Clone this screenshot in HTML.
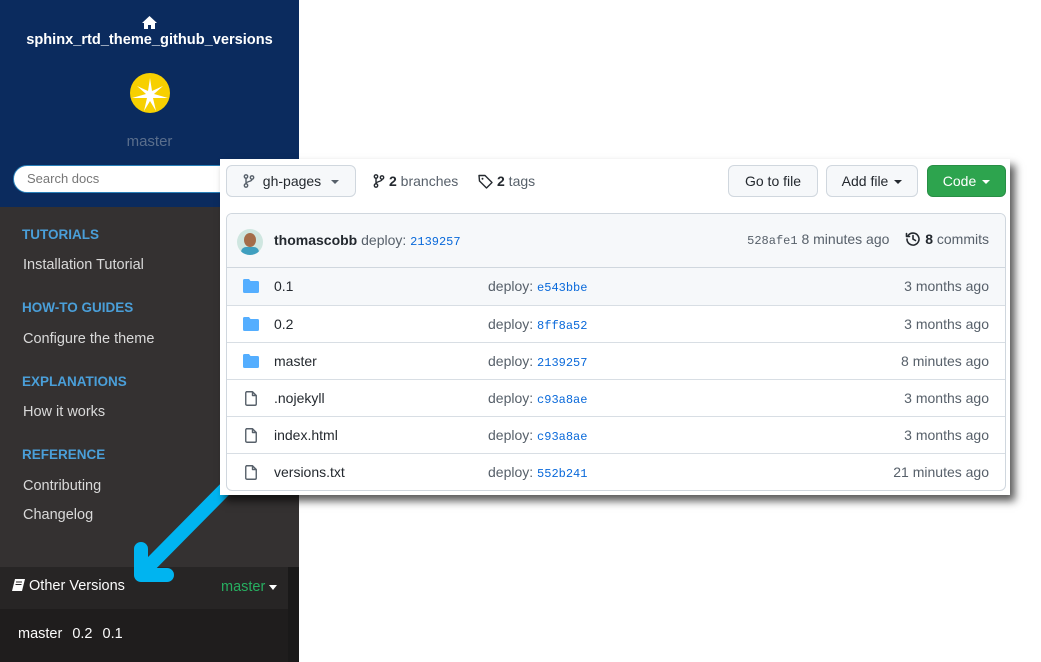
<!DOCTYPE html><html><head><meta charset="utf-8"><style>
*{margin:0;padding:0;box-sizing:border-box}
body{width:1041px;height:662px;position:relative;overflow:hidden;background:#fff;font-family:"Liberation Sans",sans-serif}
.side{position:absolute;left:0;top:0;width:299px;height:662px;background:#343131}
.top{position:absolute;left:0;top:0;width:299px;height:207px;background:#0b2b5e;text-align:center;color:#fff}
.t{position:absolute;left:0;width:299px;font-weight:bold;font-size:14.6px;top:32px}
.cap{position:absolute;left:22px;color:#4a9fd9;font-weight:bold;font-size:13.5px}
.it{position:absolute;left:23px;color:#d9d9d9;font-size:14.5px}
.panel{position:absolute;left:220px;top:159px;width:790px;height:336px;background:#fff;box-shadow:5px 6px 8px rgba(0,0,0,.65);color:#24292f;font-size:14px}
.btn{position:absolute;top:6px;height:32px;border:1px solid #d0d7de;border-radius:6px;background:#f6f8fa;font-size:14px;line-height:30px;text-align:center}
.box{position:absolute;left:6px;top:54px;width:780px;height:278px;border:1px solid #d0d7de;border-radius:6px;overflow:hidden}
.hd{height:54px;background:#f6f8fa;border-bottom:1px solid #d0d7de;position:relative}
.row{height:37px;border-top:1px solid #d8dee4;position:relative;line-height:36px}
.row.f{border-top:none}
.row .ic{position:absolute;left:16px;top:11px}
.row .n{position:absolute;left:47px}
.row .m{position:absolute;left:261px;color:#57606a}
.row .a{position:absolute;right:16px;color:#57606a}
.mono{font-family:"Liberation Mono",monospace;font-size:12px;color:#0969da}
.gr{color:#57606a}
.car{display:inline-block;border-left:4px solid transparent;border-right:4px solid transparent;border-top:4px solid currentColor;vertical-align:middle;margin-left:4px}
</style></head><body>
<div class="side">
<div class="top">
<svg style="position:absolute;left:142px;top:16px" width="15" height="13" viewBox="0 0 15 13"><path d="M7.5 0 L15 7 L13 7 L13 13 L9 13 L9 9 L6 9 L6 13 L2 13 L2 7 L0 7Z" fill="#fff"/></svg>
<div class="t">sphinx_rtd_theme_github_versions</div>
<svg style="position:absolute;left:130px;top:73px" width="40" height="40" viewBox="0 0 40 40"><circle cx="20" cy="20" r="20" fill="#f7d000"/><path d="M20 5 L22 18 L33 13 L24 21 L38 25 L23 25 L26 38 L20 28 L14 38 L17 25 L2 25 L16 21 L7 13 L18 18Z" fill="#fff"/></svg>
<div style="position:absolute;left:0;width:299px;top:133px;font-size:15px;color:#5a6e8c">master</div>
<div style="position:absolute;left:13px;top:165px;width:290px;height:28px;border-radius:14px;background:#fff;border:1px solid #2980b9;text-align:left;padding-left:13px;line-height:26px;font-size:13px;color:#777">Search docs</div>
</div>
<div class="cap" style="top:227px">TUTORIALS</div><div class="it" style="top:257px">Installation Tutorial</div>
<div class="cap" style="top:300px">HOW-TO GUIDES</div><div class="it" style="top:331px">Configure the theme</div>
<div class="cap" style="top:374px">EXPLANATIONS</div><div class="it" style="top:404px">How it works</div>
<div class="cap" style="top:447px">REFERENCE</div><div class="it" style="top:478px">Contributing</div><div class="it" style="top:507px">Changelog</div>
<div style="position:absolute;left:0;top:567px;width:288px;height:42px;background:#272525"></div>
<div style="position:absolute;left:0;top:609px;width:288px;height:53px;background:#1f1d1d"></div>
<div style="position:absolute;left:288px;top:567px;width:11px;height:95px;background:#1a1919"></div>
<div style="position:absolute;left:12px;top:578px;color:#fcfcfc;font-size:14.5px"><svg width="13" height="12" viewBox="0 0 13 12" style="vertical-align:-1px"><path d="M3 0H13L10 12H0Z" fill="#fcfcfc"/><path d="M4 3H10M3.5 5.5H9.5" stroke="#272525" stroke-width="1"/></svg> Other Versions</div>
<div style="position:absolute;left:221px;top:579px;color:#27ae60;font-size:14.5px">master<span class="car" style="color:#fff;border-width:5px 4px 0"></span></div>
<div style="position:absolute;left:18px;top:626px;color:#fcfcfc;font-size:14.5px;word-spacing:6px">master 0.2 0.1</div>
</div>
<svg style="position:absolute;left:0;top:0" width="300" height="662"><g stroke="#00b4f0" stroke-width="14" stroke-linecap="round" stroke-linejoin="round" fill="none"><path d="M232 482 L145 570"/><path d="M141 549 L141 575 L167 575"/></g></svg>
<div class="panel">
<div class="btn" style="left:6px;width:130px"><svg width="12" height="14" viewBox="0 0 12 14" style="vertical-align:-2px;margin-right:8px"><g fill="none" stroke="#57606a" stroke-width="1.4"><circle cx="3" cy="2.5" r="1.7"/><circle cx="3" cy="11.5" r="1.7"/><circle cx="9" cy="3.5" r="1.7"/><path d="M3 4.2V9.8M9 5.2C9 8 3 7 3 9.8"/></g></svg>gh-pages<span class="car" style="margin-left:10px;color:#57606a"></span></div>
<div style="position:absolute;left:153px;top:14px;color:#57606a"><svg width="12" height="14" viewBox="0 0 12 14" style="vertical-align:-2px;margin-right:4px"><g fill="none" stroke="#24292f" stroke-width="1.4"><circle cx="3" cy="2.5" r="1.7"/><circle cx="3" cy="11.5" r="1.7"/><circle cx="9" cy="3.5" r="1.7"/><path d="M3 4.2V9.8M9 5.2C9 8 3 7 3 9.8"/></g></svg><b style="color:#24292f">2</b> branches</div>
<div style="position:absolute;left:258px;top:14px;color:#57606a"><svg width="15" height="15" viewBox="0 0 15 15" style="vertical-align:-3px;margin-right:4px"><path d="M1 1.5H7L14 8.5L8.5 14L1.5 7Z" fill="none" stroke="#24292f" stroke-width="1.4" stroke-linejoin="round"/><circle cx="4.5" cy="4.8" r="1" fill="#24292f"/></svg><b style="color:#24292f">2</b> tags</div>
<div class="btn" style="left:508px;width:90px">Go to file</div>
<div class="btn" style="left:606px;width:92px">Add file<span class="car" style="margin-left:6px"></span></div>
<div class="btn" style="left:707px;width:79px;background:#2da44e;border-color:#288e45;color:#fff">Code<span class="car" style="margin-left:6px"></span></div>
<div class="box">
<div class="hd">
<div style="position:absolute;left:10px;top:15px;width:26px;height:26px;border-radius:50%;background:#cfe6e0;overflow:hidden"><div style="position:absolute;left:7px;top:4px;width:12px;height:14px;border-radius:50%;background:#a46d4a"></div><div style="position:absolute;left:4px;top:18px;width:18px;height:10px;background:#3f9fbf;border-radius:5px 5px 0 0"></div></div>
<div style="position:absolute;left:47px;top:18px"><b>thomascobb</b> <span class="gr">deploy:</span> <span class="mono">2139257</span></div>
<div style="position:absolute;right:16px;top:17px" class="gr"><span class="mono" style="color:#57606a">528afe1</span> 8 minutes ago <svg width="16" height="16" viewBox="0 0 16 16" style="vertical-align:-3px;margin-left:12px"><path d="M3.2 4.5A6 6 0 1 1 2 8" fill="none" stroke="#24292f" stroke-width="1.6" stroke-linecap="round"/><path d="M1.5 2.5V5.5H4.5" fill="none" stroke="#24292f" stroke-width="1.6" stroke-linecap="round" stroke-linejoin="round"/><path d="M8 4.5V8L10.5 9.5" fill="none" stroke="#24292f" stroke-width="1.6" stroke-linecap="round"/></svg> <b style="color:#24292f">8</b> commits</div>
</div>
<div class="row f" style="background:#f6f8fa"><svg class="ic" width="16" height="14" viewBox="0 0 16 14"><path d="M0 1.5Q0 0 1.5 0H6L7.5 2H14.5Q16 2 16 3.5V12.5Q16 14 14.5 14H1.5Q0 14 0 12.5Z" fill="#54aeff"/></svg><span class="n">0.1</span><span class="m">deploy: <span class="mono">e543bbe</span></span><span class="a">3 months ago</span></div>
<div class="row"><svg class="ic" width="16" height="14" viewBox="0 0 16 14"><path d="M0 1.5Q0 0 1.5 0H6L7.5 2H14.5Q16 2 16 3.5V12.5Q16 14 14.5 14H1.5Q0 14 0 12.5Z" fill="#54aeff"/></svg><span class="n">0.2</span><span class="m">deploy: <span class="mono">8ff8a52</span></span><span class="a">3 months ago</span></div>
<div class="row"><svg class="ic" width="16" height="14" viewBox="0 0 16 14"><path d="M0 1.5Q0 0 1.5 0H6L7.5 2H14.5Q16 2 16 3.5V12.5Q16 14 14.5 14H1.5Q0 14 0 12.5Z" fill="#54aeff"/></svg><span class="n">master</span><span class="m">deploy: <span class="mono">2139257</span></span><span class="a">8 minutes ago</span></div>
<div class="row"><svg class="ic" width="12" height="15" viewBox="0 0 12 15" style="left:18px"><path d="M1.5 0.75H7.5L11.25 4.5V13Q11.25 14.25 10 14.25H2Q0.75 14.25 0.75 13V2Q0.75 0.75 2 0.75ZM7.5 0.75V4.5H11.25" fill="none" stroke="#57606a" stroke-width="1.4" stroke-linejoin="round"/></svg><span class="n">.nojekyll</span><span class="m">deploy: <span class="mono">c93a8ae</span></span><span class="a">3 months ago</span></div>
<div class="row"><svg class="ic" width="12" height="15" viewBox="0 0 12 15" style="left:18px"><path d="M1.5 0.75H7.5L11.25 4.5V13Q11.25 14.25 10 14.25H2Q0.75 14.25 0.75 13V2Q0.75 0.75 2 0.75ZM7.5 0.75V4.5H11.25" fill="none" stroke="#57606a" stroke-width="1.4" stroke-linejoin="round"/></svg><span class="n">index.html</span><span class="m">deploy: <span class="mono">c93a8ae</span></span><span class="a">3 months ago</span></div>
<div class="row"><svg class="ic" width="12" height="15" viewBox="0 0 12 15" style="left:18px"><path d="M1.5 0.75H7.5L11.25 4.5V13Q11.25 14.25 10 14.25H2Q0.75 14.25 0.75 13V2Q0.75 0.75 2 0.75ZM7.5 0.75V4.5H11.25" fill="none" stroke="#57606a" stroke-width="1.4" stroke-linejoin="round"/></svg><span class="n">versions.txt</span><span class="m">deploy: <span class="mono">552b241</span></span><span class="a">21 minutes ago</span></div>
</div>
</div>
</body></html>
